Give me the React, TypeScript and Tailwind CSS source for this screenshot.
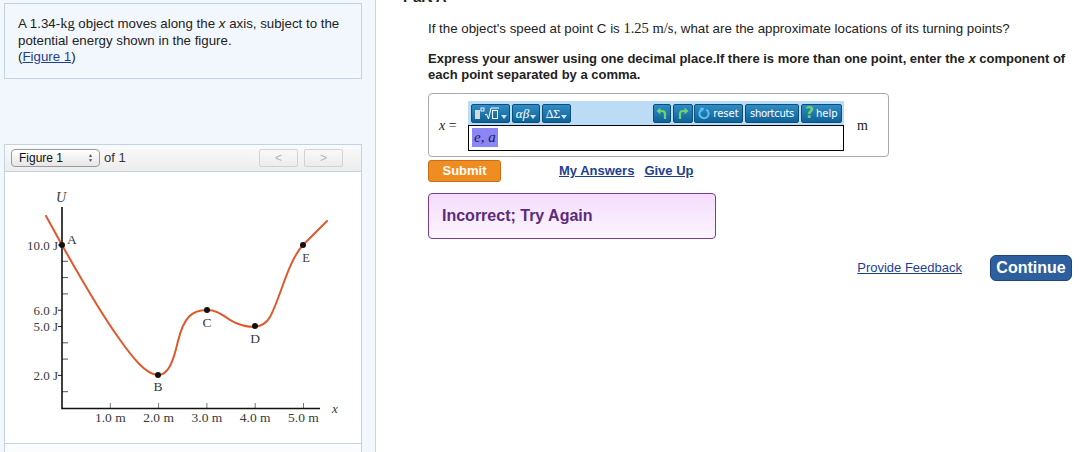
import React from "react";

const sans = "font-['Liberation_Sans',Arial,sans-serif]";
const serif = "font-['Liberation_Serif','Times_New_Roman',serif]";

function Caret() {
  return (
    <svg width="6" height="4" viewBox="0 0 6 4" className="mt-[7px] ml-[1px]">
      <path d="M0 0 L6 0 L3 4 Z" fill="#cfe6f7" />
    </svg>
  );
}

function ToolButton({ className, children }: { className: string; children: React.ReactNode }) {
  return (
    <div
      className={`flex h-[19px] items-center justify-center rounded-[2px] border border-[#0b4f7c] bg-gradient-to-b from-[#2f8cc4] to-[#0e6398] text-white ${className}`}
    >
      {children}
    </div>
  );
}

function Toolbar() {
  return (
    <div className="flex h-[24px] items-start bg-[#bcdcf5] pl-[3px] pr-[2px] pt-[3px]">
      <ToolButton className="w-[39px]">
        <svg width="26" height="14" viewBox="0 0 26 14">
          <rect x="1" y="3" width="5" height="9" fill="#d8d8d8" />
          <rect x="7" y="1" width="3" height="3" fill="none" stroke="#fff" strokeWidth="0.9" />
          <path d="M11 8 L12.5 7 L14.5 12 L17 1 L25 1" fill="none" stroke="#fff" strokeWidth="1" />
          <rect x="18.5" y="3.5" width="5" height="8" fill="none" stroke="#fff" strokeWidth="1" />
        </svg>
        <Caret />
      </ToolButton>
      <ToolButton className="ml-[2px] w-[28px]">
        <span className={`${serif} text-[13px] italic leading-none`}>αβ</span>
        <Caret />
      </ToolButton>
      <ToolButton className="ml-[2px] w-[29px]">
        <span className={`${serif} text-[12px] leading-none`}>ΔΣ</span>
        <Caret />
      </ToolButton>
      <div className="flex-1" />
      <ToolButton className="w-[18px]">
        <svg width="12" height="12" viewBox="0 0 12 12">
          <path d="M9 11 L9 6 Q9 3 6 3 L3 3" fill="none" stroke="#6fd36a" strokeWidth="2.2" />
          <path d="M0.5 3 L4.5 -0.5 L4.5 6.5 Z" fill="#6fd36a" />
        </svg>
      </ToolButton>
      <ToolButton className="ml-[2px] w-[20px]">
        <svg width="12" height="12" viewBox="0 0 12 12">
          <path d="M3 11 L3 6 Q3 3 6 3 L9 3" fill="none" stroke="#6fd36a" strokeWidth="2.2" />
          <path d="M11.5 3 L7.5 -0.5 L7.5 6.5 Z" fill="#6fd36a" />
        </svg>
      </ToolButton>
      <ToolButton className="ml-[1px] w-[49px] gap-[3px]">
        <svg width="12" height="13" viewBox="0 0 12 13">
          <path d="M4 2.5 A4.6 4.6 0 1 0 8.2 2.6" fill="none" stroke="#5cc2f5" strokeWidth="2" />
          <path d="M2 0.5 L6.5 1 L4 5 Z" fill="#5cc2f5" />
        </svg>
        <span className="font-['DejaVu_Sans',Verdana,sans-serif] text-[10px] leading-none">reset</span>
      </ToolButton>
      <ToolButton className="ml-[2px] w-[54px]">
        <span className="font-['DejaVu_Sans',Verdana,sans-serif] text-[10px] leading-none tracking-[-0.3px]">shortcuts</span>
      </ToolButton>
      <ToolButton className="ml-[2px] w-[41px] gap-[2px]">
        <span className="font-['DejaVu_Sans',Verdana,sans-serif] text-[15px] font-bold leading-none text-[#6fd36a]">?</span>
        <span className="font-['DejaVu_Sans',Verdana,sans-serif] text-[10px] leading-none">help</span>
      </ToolButton>
    </div>
  );
}

function Chart() {
  const curve =
    "M46,217 L62,246 C80,278 98,310 118,338 C132,358 146,376 158,376 C168,376 173,364 178,342 C184,318 192,311 207,311 C220,311 226,320 236,324 C246,328 262,332 270,318 C280,300 288,262 303,246 L327,222";
  const yTicks = [1, 2, 3, 4, 5, 6, 7, 8, 9, 10];
  const labeled: Record<number, string> = { 10: "10.0 J", 6: "6.0 J", 5: "5.0 J", 2: "2.0 J" };
  const xTicks = [1, 2, 3, 4, 5];
  const yOf = (u: number) => 409 - u * 16.3;
  const xOf = (m: number) => 62 + m * 48.3;
  return (
    <svg width="356" height="271" viewBox="5 173 356 271" className="block">
      <g fontFamily="'Liberation Serif', 'Times New Roman', serif" fill="#3a3a3a">
        <text x="61" y="203" fontSize="14" fontStyle="italic" textAnchor="middle">U</text>
        <text x="335" y="414" fontSize="13" fontStyle="italic" textAnchor="middle">x</text>
        {yTicks.map((u) =>
          labeled[u] ? (
            <g key={u}>
              <line x1="58" x2="62" y1={yOf(u)} y2={yOf(u)} stroke="#222" strokeWidth="1" />
              <text x="58" y={yOf(u) + 4.5} fontSize="13" textAnchor="end">{labeled[u]}</text>
            </g>
          ) : (
            <line key={u} x1="62" x2="68" y1={yOf(u)} y2={yOf(u)} stroke="#555" strokeWidth="1" />
          )
        )}
        {xTicks.map((m) => (
          <g key={m}>
            <line x1={xOf(m)} x2={xOf(m)} y1="404" y2="409" stroke="#777" strokeWidth="1" />
            <text x={xOf(m)} y="423" fontSize="13.5" textAnchor="middle">{`${m}.0 m`}</text>
          </g>
        ))}
        <path d="M62,208 L62,409.5 L320,409.5" fill="none" stroke="#111" strokeWidth="1.6" />
        <path d={curve} fill="none" stroke="#e0592c" strokeWidth="2" strokeLinecap="round" />
        {[
          [62, 246],
          [158, 376],
          [207, 311],
          [255, 327],
          [303, 246],
        ].map(([x, y]) => (
          <circle key={x} cx={x} cy={y} r="3" fill="#111" />
        ))}
        <text x="67" y="245" fontSize="13.5">A</text>
        <text x="158" y="392" fontSize="13.5" textAnchor="middle">B</text>
        <text x="207" y="328" fontSize="13.5" textAnchor="middle">C</text>
        <text x="255" y="344" fontSize="13.5" textAnchor="middle">D</text>
        <text x="306" y="263" fontSize="12.5" textAnchor="middle">E</text>
      </g>
    </svg>
  );
}

export default function App() {
  return (
    <div className={`flex h-[452px] w-[1082px] overflow-hidden bg-white ${sans} text-[13.3px] text-[#222]`}>
      {/* problem column */}
      <aside className="w-[376px] shrink-0 border-r border-[#c5d6ea] bg-[#f2f7fe] pl-[4px] pt-[3px]">
        <div className="h-[76px] w-[358px] border border-[#c3d3e6] bg-[#f2f7fe] px-[13px] pt-[11px] leading-[16.5px]">
          <p>
            A 1.34-<span className={`${serif} text-[14.5px]`}>kg</span> object moves along the <i>x</i> axis, subject to the
          </p>
          <p>potential energy shown in the figure.</p>
          <p>
            (<span className="text-[#1c3f94] underline">Figure 1</span>)
          </p>
        </div>

        <div className="mt-[65px] w-[358px] border border-[#c3d3e6] bg-white">
          <div className="flex h-[27px] items-center border-b border-[#c3d3e6] bg-gradient-to-b from-[#fbfbfb] to-[#ececec] pl-[6px] pr-[18px]">
            <div className="flex h-[18px] w-[89px] items-center justify-between rounded-[4px] border border-[#9a9a9a] bg-gradient-to-b from-white to-[#e6e6e6] pl-[7px] pr-[6px] text-[12px] text-[#111]">
              <span>Figure 1</span>
              <span className="flex flex-col text-[5px] leading-[5px] text-[#555]">
                <span>▲</span>
                <span>▼</span>
              </span>
            </div>
            <span className="ml-[4px] text-[13px] text-[#333]">of 1</span>
            <div className="flex-1" />
            <div className="flex h-[18px] w-[39px] items-center justify-center rounded-[2px] border border-[#d2d2d2] bg-gradient-to-b from-[#f9f9f9] to-[#ececec] text-[12px] text-[#b5b5b5]">
              &lt;
            </div>
            <div className="ml-[6px] flex h-[18px] w-[39px] items-center justify-center rounded-[2px] border border-[#d2d2d2] bg-gradient-to-b from-[#f9f9f9] to-[#ececec] text-[12px] text-[#b5b5b5]">
              &gt;
            </div>
          </div>
          <Chart />
          <div className="h-[20px] border-t border-[#c3d3e6] bg-[#fbfcfe]" />
        </div>
      </aside>

      {/* part A */}
      <main className="flex-1 pl-[27px] pr-[10px]">
        <h2 className="-mt-[12px] h-[18px] text-[15px] font-bold leading-[18px] text-[#222]">Part A</h2>
        <div className="pl-[25px]">
          <p className="mt-[14px] leading-[16px]">
            If the object's speed at point C is{" "}
            <span className={`${serif} text-[14.5px]`}>1.25 m/s</span>, what are the approximate locations of its turning points?
          </p>
          <p className="mt-[14px] text-[13px] font-bold leading-[16px]">
            Express your answer using one decimal place.If there is more than one point, enter the <i>x</i> component of
            <br />
            each point separated by a comma.
          </p>

          <div className="mt-[10px] flex h-[64px] w-[461px] items-center rounded-[4px] border border-[#a9a9a9] pl-[10px]">
            <span className={`${serif} w-[29px] text-[14px]`}>
              <i>x</i> =
            </span>
            <div className="mt-[2px] w-[376px]">
              <Toolbar />
              <div className="h-[26px] border border-black bg-white pl-[3px] pt-[2px]">
                <span className={`${serif} inline-block h-[19px] bg-[#8b86f6] px-[2px] text-[15px] italic leading-[19px] text-[#1d1d55]`}>
                  e, a
                </span>
              </div>
            </div>
            <span className={`${serif} ml-[13px] text-[14px]`}>m</span>
          </div>

          <div className="mt-[3px] flex items-center">
            <button className="h-[22px] w-[73px] rounded-[3px] border border-[#c96f12] bg-[#ef8d22] text-[13px] font-bold text-white">
              Submit
            </button>
            <a className="ml-[58px] text-[13px] font-bold text-[#1c3f94] underline">My Answers</a>
            <a className="ml-[10px] text-[13px] font-bold text-[#1c3f94] underline">Give Up</a>
          </div>

          <div className="mt-[11px] flex h-[46px] w-[288px] items-center rounded-[4px] border border-[#7b3b97] bg-gradient-to-b from-[#f4dcfb] to-[#fdf5ff] pl-[13px]">
            <span className="text-[16px] font-bold text-[#5a2c7b]">Incorrect; Try Again</span>
          </div>
        </div>

        <div className="mt-[16px] flex items-center justify-end">
          <a className="text-[13px] text-[#1c3f94] underline">Provide Feedback</a>
          <button className="ml-[28px] h-[26px] w-[82px] rounded-[6px] border border-[#1d457b] bg-[#2d5e9e] text-[16px] font-bold text-white">
            Continue
          </button>
        </div>
      </main>
    </div>
  );
}
